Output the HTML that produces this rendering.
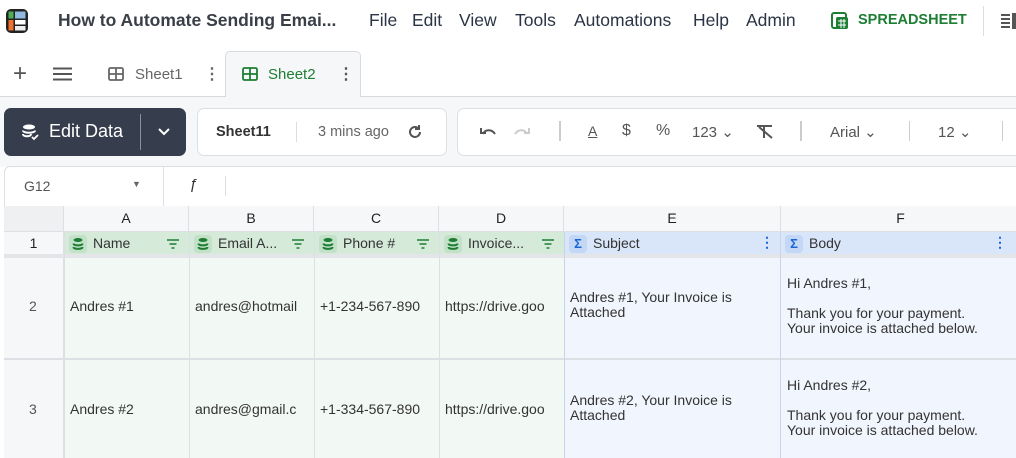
<!DOCTYPE html>
<html><head><style>
*{box-sizing:border-box;margin:0;padding:0}
body{width:1016px;height:457px;overflow:hidden;background:#fff;font-family:"Liberation Sans",Arial,sans-serif;color:#333;position:relative}
.a{position:absolute}
.menu{top:10px;font-size:17.5px;color:#2b3445}
.cell{position:absolute;border-right:1px solid #dcdfe3;border-bottom:1px solid #dcdfe3;font-size:14px;color:#222}
.db{position:absolute;top:235px;width:18px;height:18px;background:#c3e0c8;border-radius:4px}
.sg{position:absolute;top:235px;width:18px;height:18px;background:#c4d7f5;border-radius:4px;color:#1a66d9;font-size:13px;font-weight:bold;text-align:center;line-height:18px}
.flt{position:absolute;top:238px}
</style></head><body>
<svg width="0" height="0" style="position:absolute"><defs>
<g id="dbi"><ellipse cx="9" cy="5" rx="4.5" ry="2" fill="#1e7e34"/><path d="M4.5 8.5c0 2.5 9 2.5 9 0M4.5 12c0 2.5 9 2.5 9 0" stroke="#1e7e34" stroke-width="2" fill="none"/></g>
<g id="fi"><path d="M1 2h12M3.5 6h7M5.5 10h3" stroke="#1e7e34" stroke-width="1.6"/></g>
</defs></svg>
<!-- top bar -->
<svg class="a" style="left:5px;top:8px" width="24" height="26" viewBox="0 0 24 26"><rect x="1" y="1" width="22" height="24" rx="5" fill="#222"/><rect x="3.5" y="3.5" width="5" height="7" fill="#4caf50"/><rect x="10" y="3.5" width="10.5" height="7" fill="#90b8e0"/><rect x="3.5" y="12" width="5" height="10.5" fill="#f07030"/><rect x="10" y="12" width="10.5" height="4.5" fill="#fff"/><rect x="10" y="18" width="10.5" height="4.5" fill="#eee"/></svg>
<div class="a" style="left:58px;top:10px;font-size:17.5px;font-weight:bold;color:#3a3f47">How to Automate Sending Emai...</div>
<div class="a menu" style="left:369px">File</div>
<div class="a menu" style="left:412px">Edit</div>
<div class="a menu" style="left:459px">View</div>
<div class="a menu" style="left:515px">Tools</div>
<div class="a menu" style="left:574px">Automations</div>
<div class="a menu" style="left:693px">Help</div>
<div class="a menu" style="left:746px">Admin</div>
<svg class="a" style="left:830px;top:11px" width="20" height="20" viewBox="0 0 20 20"><rect x="2" y="2" width="14" height="15" rx="2" fill="none" stroke="#1e7e34" stroke-width="2"/><rect x="6" y="6" width="12" height="12" rx="2" fill="#1e7e34"/><path d="M8 10h8M8 14h8M11 8v9M14 8v9" stroke="#fff" stroke-width="1"/></svg>
<div class="a" style="left:858px;top:12px;font-size:14.5px;font-weight:bold;color:#1e7e34">SPREADSHEET</div>
<div class="a" style="left:983px;top:6px;width:1px;height:30px;background:#ddd"></div>
<svg class="a" style="left:1000px;top:12px" width="16" height="18"><path d="M1 3h9M1 7h9M1 11h9M1 15h9" stroke="#555" stroke-width="2"/><rect x="12" y="1" width="4" height="16" fill="#555"/></svg>
<!-- tabs -->
<div class="a" style="left:0;top:96px;width:1016px;height:1px;background:#d6d9de"></div>
<div class="a" style="left:13px;top:62px;font-size:24px;color:#555;line-height:24px">+</div>
<svg class="a" style="left:53px;top:67px" width="20" height="14"><path d="M0 1.5h19M0 7h19M0 12.5h19" stroke="#555" stroke-width="2"/></svg>
<svg class="a" style="left:108px;top:67px" width="16" height="14"><rect x="1" y="1" width="14" height="12" rx="1.5" fill="none" stroke="#666" stroke-width="1.8"/><path d="M1 7h14M8 1v12" stroke="#666" stroke-width="1.8"/></svg>
<div class="a" style="left:135px;top:66px;font-size:15px;color:#666">Sheet1</div>
<div class="a" style="left:204px;top:64px;font-size:16px;color:#666;font-weight:bold">⋮</div>
<div class="a" style="left:225px;top:51px;width:136px;height:47px;background:#f6f7f9;border:1px solid #d6d9de;border-bottom:none;border-radius:5px 5px 0 0"></div>
<svg class="a" style="left:242px;top:67px" width="16" height="14"><rect x="1" y="1" width="14" height="12" rx="1.5" fill="none" stroke="#1e7e34" stroke-width="1.8"/><path d="M1 7h14M8 1v12" stroke="#1e7e34" stroke-width="1.8"/></svg>
<div class="a" style="left:268px;top:66px;font-size:15px;color:#1e7e34">Sheet2</div>
<div class="a" style="left:338px;top:64px;font-size:16px;color:#555;font-weight:bold">⋮</div>
<!-- toolbar -->
<div class="a" style="left:0;top:97px;width:1016px;height:70px;background:#f6f7f9"></div>
<div class="a" style="left:4px;top:108px;width:182px;height:48px;background:#363e4d;border-radius:7px"></div>
<svg class="a" style="left:21px;top:123px" width="18" height="18" viewBox="0 0 18 18"><ellipse cx="8" cy="4" rx="6" ry="2.5" fill="#fff"/><path d="M2 7.5c0 3 12 3 12 0M2 11c0 3 8 3 8 0" stroke="#fff" stroke-width="2" fill="none"/><path d="M11 14l2 2 4-4" stroke="#fff" stroke-width="1.8" fill="none"/></svg>
<div class="a" style="left:49px;top:121px;font-size:18px;color:#fff">Edit Data</div>
<div class="a" style="left:140px;top:114px;width:1px;height:36px;background:#8a909a"></div>
<svg class="a" style="left:157px;top:127px" width="14" height="10"><path d="M2 2l5 5 5-5" stroke="#fff" stroke-width="2" fill="none"/></svg>
<div class="a" style="left:197px;top:108px;width:250px;height:48px;background:#fff;border:1px solid #dcdfe3;border-radius:7px"></div>
<div class="a" style="left:216px;top:124px;font-size:14.5px;font-weight:bold;color:#333">Sheet11</div>
<div class="a" style="left:296px;top:122px;width:1px;height:20px;background:#ddd"></div>
<div class="a" style="left:318px;top:124px;font-size:14.5px;color:#666">3 mins ago</div>
<svg class="a" style="left:407px;top:124px" width="16" height="16"><path d="M13 8a5 5 0 1 1-2-4" stroke="#555" stroke-width="2" fill="none"/><path d="M12 1v4h-4" stroke="#555" stroke-width="2" fill="none"/></svg>
<div class="a" style="left:457px;top:108px;width:570px;height:48px;background:#fff;border:1px solid #dcdfe3;border-radius:7px"></div>
<svg class="a" style="left:479px;top:125px" width="18" height="12"><path d="M4 9c2-5 9-5 12 0M2 3v5h5" stroke="#555" stroke-width="2" fill="none"/></svg>
<svg class="a" style="left:513px;top:125px" width="18" height="12"><path d="M14 9c-2-5-9-5-12 0M16 3v5h-5" stroke="#ccc" stroke-width="2" fill="none"/></svg>
<div class="a" style="left:559px;top:121px;width:2px;height:20px;background:#ccc"></div>
<div class="a" style="left:588px;top:123px;font-size:14px;color:#555;text-decoration:underline">A</div>
<div class="a" style="left:622px;top:122px;font-size:16px;color:#555">$</div>
<div class="a" style="left:656px;top:122px;font-size:16px;color:#555">%</div>
<div class="a" style="left:692px;top:123px;font-size:15px;color:#555">123 ⌄</div>
<svg class="a" style="left:756px;top:124px" width="18" height="16"><path d="M1 2h15M8 2v12M3 3l13 11" stroke="#555" stroke-width="2" fill="none"/></svg>
<div class="a" style="left:800px;top:121px;width:2px;height:20px;background:#ccc"></div>
<div class="a" style="left:830px;top:123px;font-size:15px;color:#555">Arial ⌄</div>
<div class="a" style="left:909px;top:121px;width:1px;height:20px;background:#ccc"></div>
<div class="a" style="left:938px;top:123px;font-size:15px;color:#555">12 ⌄</div>
<div class="a" style="left:1002px;top:121px;width:1px;height:20px;background:#ccc"></div>
<!-- formula bar -->
<div class="a" style="left:4px;top:166px;width:1020px;height:41px;background:#fff;border:1px solid #dcdfe3;border-radius:6px 0 0 0"></div>
<div class="a" style="left:24px;top:178px;font-size:14px;color:#555">G12</div>
<div class="a" style="left:132px;top:179px;font-size:9px;color:#666">▼</div>
<div class="a" style="left:163px;top:167px;width:1px;height:39px;background:#dcdfe3"></div>
<div class="a" style="left:189px;top:176px;font-size:15px;color:#333;font-style:italic">ƒ</div>
<div class="a" style="left:225px;top:176px;width:1px;height:20px;background:#ddd"></div>
<!-- grid -->
<div class="a" style="left:4px;top:206px;width:1012px;height:251px;background:#fff"></div>
<div class="cell" style="left:4px;top:206px;width:60px;height:26px;background:#eef0f2"></div>
<div class="cell" style="left:64px;top:206px;width:125px;height:26px;background:#f6f7f9;text-align:center;line-height:24px">A</div>
<div class="cell" style="left:189px;top:206px;width:125px;height:26px;background:#f6f7f9;text-align:center;line-height:24px">B</div>
<div class="cell" style="left:314px;top:206px;width:125px;height:26px;background:#f6f7f9;text-align:center;line-height:24px">C</div>
<div class="cell" style="left:439px;top:206px;width:125px;height:26px;background:#f6f7f9;text-align:center;line-height:24px">D</div>
<div class="cell" style="left:564px;top:206px;width:217px;height:26px;background:#f6f7f9;text-align:center;line-height:24px">E</div>
<div class="cell" style="left:781px;top:206px;width:240px;height:26px;background:#f6f7f9;text-align:center;line-height:24px">F</div>
<div class="cell" style="left:4px;top:232px;width:60px;height:24px;background:#f6f7f9;text-align:center;line-height:22px">1</div>
<div class="a" style="left:64px;top:232px;width:500px;height:24px;background:#d5ead9"></div>
<div class="a" style="left:564px;top:232px;width:460px;height:24px;background:#d9e5f8"></div>
<div class="a" style="left:64px;top:254px;width:960px;height:4px;background:#e3e5e8"></div>
<div class="a" style="left:4px;top:254px;width:60px;height:4px;background:#e3e5e8"></div>

<!-- header cells -->
<div class="a" style="left:64px;top:232px;width:1px;height:226px;background:#dcdfe3"></div>
<svg class="db" style="left:69px" viewBox="0 0 18 18"><use href="#dbi"/></svg>
<div class="a" style="left:93px;top:235px;font-size:14px">Name</div><svg class="flt" style="left:166px" width="14" height="12"><use href="#fi"/></svg>
<div class="a" style="left:189px;top:232px;width:1px;height:226px;background:#dcdfe3"></div>
<svg class="db" style="left:194px" viewBox="0 0 18 18"><use href="#dbi"/></svg>
<div class="a" style="left:218px;top:235px;font-size:14px">Email A...</div><svg class="flt" style="left:291px" width="14" height="12"><use href="#fi"/></svg>
<div class="a" style="left:314px;top:232px;width:1px;height:226px;background:#dcdfe3"></div>
<svg class="db" style="left:319px" viewBox="0 0 18 18"><use href="#dbi"/></svg>
<div class="a" style="left:343px;top:235px;font-size:14px">Phone #</div><svg class="flt" style="left:416px" width="14" height="12"><use href="#fi"/></svg>
<div class="a" style="left:439px;top:232px;width:1px;height:226px;background:#dcdfe3"></div>
<svg class="db" style="left:444px" viewBox="0 0 18 18"><use href="#dbi"/></svg>
<div class="a" style="left:468px;top:235px;font-size:14px">Invoice...</div><svg class="flt" style="left:541px" width="14" height="12"><use href="#fi"/></svg>
<div class="a" style="left:564px;top:232px;width:1px;height:226px;background:#c9d4e6"></div>
<div class="sg" style="left:569px">Σ</div>
<div class="a" style="left:593px;top:235px;font-size:14px">Subject</div><div class="a" style="left:760px;top:234px;font-size:14px;color:#1a66d9;font-weight:bold">⋮</div>
<div class="a" style="left:780px;top:232px;width:1px;height:226px;background:#c9d4e6"></div>
<div class="sg" style="left:785px">Σ</div>
<div class="a" style="left:809px;top:235px;font-size:14px">Body</div><div class="a" style="left:993px;top:234px;font-size:14px;color:#1a66d9;font-weight:bold">⋮</div>

<!-- data rows -->
<div class="a" style="left:4px;top:258px;width:60px;height:200px;background:#f6f7f9;border-right:1px solid #dcdfe3"></div>
<div class="a" style="left:65px;top:258px;width:499px;height:200px;background:#f2f8f3"></div>
<div class="a" style="left:565px;top:258px;width:460px;height:200px;background:#f1f5fd"></div>
<div class="a" style="left:4px;top:358px;width:1020px;height:2px;background:#dcdfe3"></div>
<div class="a" style="left:64px;top:258px;width:1px;height:200px;background:#dcdfe3"></div>
<div class="a" style="left:189px;top:258px;width:1px;height:200px;background:#dcdfe3"></div>
<div class="a" style="left:314px;top:258px;width:1px;height:200px;background:#dcdfe3"></div>
<div class="a" style="left:439px;top:258px;width:1px;height:200px;background:#dcdfe3"></div>
<div class="a" style="left:564px;top:258px;width:1px;height:200px;background:#c9d4e6"></div>
<div class="a" style="left:780px;top:258px;width:1px;height:200px;background:#c9d4e6"></div>

<div class="a" style="left:29px;top:298px;font-size:14px;color:#555">2</div>
<div class="a" style="left:70px;top:298px;font-size:14px">Andres #1</div>
<div class="a" style="left:195px;top:298px;font-size:14px">andres@hotmail</div>
<div class="a" style="left:320px;top:298px;font-size:14px">+1-234-567-890</div>
<div class="a" style="left:445px;top:298px;font-size:14px">https://drive.goo</div>
<div class="a" style="left:570px;top:290px;font-size:14px;line-height:15px;width:205px">Andres #1, Your Invoice is Attached</div>
<div class="a" style="left:787px;top:276px;font-size:14px;line-height:15px">Hi Andres #1,<br><br>Thank you for your payment.<br>Your invoice is attached below.</div>

<div class="a" style="left:29px;top:401px;font-size:14px;color:#555">3</div>
<div class="a" style="left:70px;top:401px;font-size:14px">Andres #2</div>
<div class="a" style="left:195px;top:401px;font-size:14px">andres@gmail.c</div>
<div class="a" style="left:320px;top:401px;font-size:14px">+1-334-567-890</div>
<div class="a" style="left:445px;top:401px;font-size:14px">https://drive.goo</div>
<div class="a" style="left:570px;top:393px;font-size:14px;line-height:15px;width:205px">Andres #2, Your Invoice is Attached</div>
<div class="a" style="left:787px;top:378px;font-size:14px;line-height:15px">Hi Andres #2,<br><br>Thank you for your payment.<br>Your invoice is attached below.</div>
</body></html>
